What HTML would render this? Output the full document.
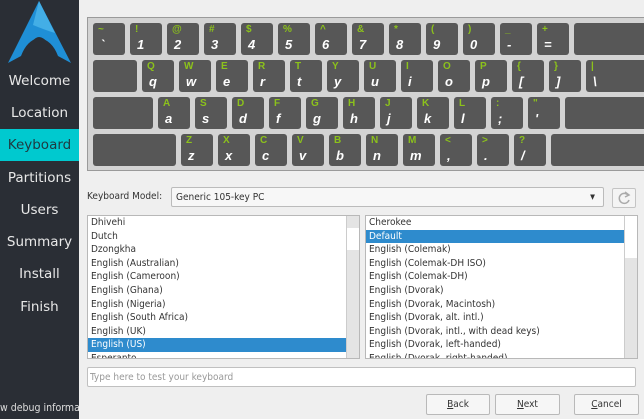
<!DOCTYPE html>
<html><head><meta charset="utf-8"><style>
body{margin:0;width:644px;height:419px;overflow:hidden;background:#efefef;font-family:"Liberation Sans",sans-serif;position:relative}
.sb{position:absolute;left:0;top:0;width:79px;height:419px;background:#2a2e35}
.m{position:absolute;left:0;width:79px;text-align:center;color:#e8e8e8;font-family:"DejaVu Sans",sans-serif;font-size:13.5px}
.kb{position:absolute;left:87px;top:17px;width:560px;height:152px;background:#d3d3d3;border:1px solid #9a9a9a;border-right:none}
.k{position:absolute;width:32px;height:32px;background:#575757;border-radius:3px}
.k b{position:absolute;left:5px;top:1px;color:#8cc21b;font-size:10px;font-weight:bold}
.k i{position:absolute;left:7px;top:14px;color:#fff;font-size:13px;font-weight:bold}
.t{font-family:"DejaVu Sans Condensed","Liberation Sans",sans-serif;font-size:10px;color:#333}
.list{position:absolute;top:215px;height:142px;background:#fff;border:1px solid #b8b8b8;overflow:hidden}
.r{height:13.6px;line-height:13.6px;padding-left:3px;white-space:nowrap}
.sel{background:#2e8bcd;color:#fff}
.scr{position:absolute;right:0;top:0;width:12px;height:142px;background:#e4e4e4;border-left:1px solid #ccc}
.btn{position:absolute;top:394px;height:19px;background:#f6f6f6;border:1px solid #b9b9b9;border-radius:2px;text-align:center;line-height:19px}
</style></head><body>
<div class="sb">
<svg width="79" height="66" style="position:absolute;left:0;top:0"><path d="M39 1 L71 63 L58 56 Q52 40 39 38 Q27 40 21 56 L8 63 Z" fill="#1f8fd6"/><path d="M39 1 L55 33 Q45 30 33 25 Z" fill="#43aee6"/><path d="M31 50 Q31 38 39 37 Q48 38 48 50 L48 63 L31 63 Z" fill="#2a2e35"/></svg>
<div class="m" style="top:73px">Welcome</div>
<div class="m" style="top:105px">Location</div>
<div class="m" style="top:129px;height:32px;line-height:32px;background:#00c9cf;color:#1f3a40">Keyboard</div>
<div class="m" style="top:170px">Partitions</div>
<div class="m" style="top:202px">Users</div>
<div class="m" style="top:234px">Summary</div>
<div class="m" style="top:266px">Install</div>
<div class="m" style="top:299px">Finish</div>
<div class="t" style="position:absolute;left:0;top:402px;color:#ddd;white-space:nowrap;width:79px;overflow:hidden;font-size:10.5px">w debug information</div>
</div>
<div class="kb">
<div style="position:absolute;left:-87px;top:-17px">
<div class="k" style="left:92px;top:22px"><b>~</b><i>`</i></div>
<div class="k" style="left:129px;top:22px"><b>!</b><i>1</i></div>
<div class="k" style="left:166px;top:22px"><b>@</b><i>2</i></div>
<div class="k" style="left:203px;top:22px"><b>#</b><i>3</i></div>
<div class="k" style="left:240px;top:22px"><b>$</b><i>4</i></div>
<div class="k" style="left:277px;top:22px"><b>%</b><i>5</i></div>
<div class="k" style="left:314px;top:22px"><b>^</b><i>6</i></div>
<div class="k" style="left:351px;top:22px"><b>&amp;</b><i>7</i></div>
<div class="k" style="left:388px;top:22px"><b>*</b><i>8</i></div>
<div class="k" style="left:425px;top:22px"><b>(</b><i>9</i></div>
<div class="k" style="left:462px;top:22px"><b>)</b><i>0</i></div>
<div class="k" style="left:499px;top:22px"><b>_</b><i>-</i></div>
<div class="k" style="left:536px;top:22px"><b>+</b><i>=</i></div>
<div class="k" style="left:573px;top:22px;width:80px"></div>
<div class="k" style="left:92px;top:59px;width:44px"></div>
<div class="k" style="left:141px;top:59px"><b>Q</b><i>q</i></div>
<div class="k" style="left:178px;top:59px"><b>W</b><i>w</i></div>
<div class="k" style="left:215px;top:59px"><b>E</b><i>e</i></div>
<div class="k" style="left:252px;top:59px"><b>R</b><i>r</i></div>
<div class="k" style="left:289px;top:59px"><b>T</b><i>t</i></div>
<div class="k" style="left:326px;top:59px"><b>Y</b><i>y</i></div>
<div class="k" style="left:363px;top:59px"><b>U</b><i>u</i></div>
<div class="k" style="left:400px;top:59px"><b>I</b><i>i</i></div>
<div class="k" style="left:437px;top:59px"><b>O</b><i>o</i></div>
<div class="k" style="left:474px;top:59px"><b>P</b><i>p</i></div>
<div class="k" style="left:511px;top:59px"><b>{</b><i>[</i></div>
<div class="k" style="left:548px;top:59px"><b>}</b><i>]</i></div>
<div class="k" style="left:585px;top:59px;width:70px"><b>|</b><i>\</i></div>
<div class="k" style="left:92px;top:96px;width:60px"></div>
<div class="k" style="left:157px;top:96px"><b>A</b><i>a</i></div>
<div class="k" style="left:194px;top:96px"><b>S</b><i>s</i></div>
<div class="k" style="left:231px;top:96px"><b>D</b><i>d</i></div>
<div class="k" style="left:268px;top:96px"><b>F</b><i>f</i></div>
<div class="k" style="left:305px;top:96px"><b>G</b><i>g</i></div>
<div class="k" style="left:342px;top:96px"><b>H</b><i>h</i></div>
<div class="k" style="left:379px;top:96px"><b>J</b><i>j</i></div>
<div class="k" style="left:416px;top:96px"><b>K</b><i>k</i></div>
<div class="k" style="left:453px;top:96px"><b>L</b><i>l</i></div>
<div class="k" style="left:490px;top:96px"><b>:</b><i>;</i></div>
<div class="k" style="left:527px;top:96px"><b>"</b><i>'</i></div>
<div class="k" style="left:564px;top:96px;width:90px"></div>
<div class="k" style="left:92px;top:133px;width:83px"></div>
<div class="k" style="left:180px;top:133px"><b>Z</b><i>z</i></div>
<div class="k" style="left:217px;top:133px"><b>X</b><i>x</i></div>
<div class="k" style="left:254px;top:133px"><b>C</b><i>c</i></div>
<div class="k" style="left:291px;top:133px"><b>V</b><i>v</i></div>
<div class="k" style="left:328px;top:133px"><b>B</b><i>b</i></div>
<div class="k" style="left:365px;top:133px"><b>N</b><i>n</i></div>
<div class="k" style="left:402px;top:133px"><b>M</b><i>m</i></div>
<div class="k" style="left:439px;top:133px"><b>&lt;</b><i>,</i></div>
<div class="k" style="left:476px;top:133px"><b>&gt;</b><i>.</i></div>
<div class="k" style="left:513px;top:133px"><b>?</b><i>/</i></div>
<div class="k" style="left:550px;top:133px;width:100px"></div>
</div></div>
<div class="t" style="position:absolute;left:87px;top:191px">Keyboard Model:</div>
<div class="t" style="position:absolute;left:171px;top:187px;border:1px solid #bbb;border-radius:2px;background:#f7f7f7;line-height:19px;padding-left:4px;box-sizing:border-box;width:433px;height:20px">Generic 105-key PC<span style="position:absolute;right:8px;top:0;font-size:7px">▼</span></div>
<div style="position:absolute;left:612px;top:188px;width:22px;height:18px;border:1px solid #c4c4c4;border-radius:2px;background:#f4f4f4"><svg width="22" height="18"><path d="M15 6 A5 5 0 1 0 16 11" fill="none" stroke="#aaa" stroke-width="1.5"/><path d="M12 3 L16 6 L12 8" fill="none" stroke="#aaa" stroke-width="1.5"/></svg></div>
<div class="list t" style="left:87px;width:271px">
<div class="r">Dhivehi</div><div class="r">Dutch</div><div class="r">Dzongkha</div><div class="r">English (Australian)</div><div class="r">English (Cameroon)</div><div class="r">English (Ghana)</div><div class="r">English (Nigeria)</div><div class="r">English (South Africa)</div><div class="r">English (UK)</div><div class="r sel" style="margin-right:12px">English (US)</div><div class="r">Esperanto</div>
<div class="scr"><div style="position:absolute;top:12px;left:0;width:12px;height:22px;background:#fff"></div></div>
</div>
<div class="list t" style="left:365px;width:271px">
<div class="r">Cherokee</div><div class="r sel" style="margin-right:12px">Default</div><div class="r">English (Colemak)</div><div class="r">English (Colemak-DH ISO)</div><div class="r">English (Colemak-DH)</div><div class="r">English (Dvorak)</div><div class="r">English (Dvorak, Macintosh)</div><div class="r">English (Dvorak, alt. intl.)</div><div class="r">English (Dvorak, intl., with dead keys)</div><div class="r">English (Dvorak, left-handed)</div><div class="r">English (Dvorak, right-handed)</div>
<div class="scr"><div style="position:absolute;top:0;left:0;width:12px;height:42px;background:#fff"></div></div>
</div>
<div class="t" style="position:absolute;left:87px;top:367px;width:549px;height:20px;background:#fff;border:1px solid #c0c0c0;border-radius:2px;line-height:20px;padding-left:2px;box-sizing:border-box;color:#999">Type here to test your keyboard</div>
<div class="btn t" style="left:426px;width:62px"><u>B</u>ack</div>
<div class="btn t" style="left:495px;width:63px"><u>N</u>ext</div>
<div class="btn t" style="left:574px;width:63px"><u>C</u>ancel</div>
</body></html>
